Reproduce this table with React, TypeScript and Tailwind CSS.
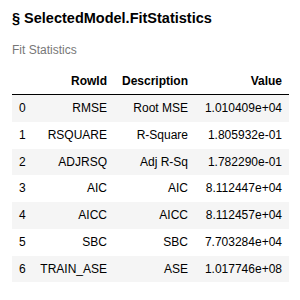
const rows = [
  ['0', 'RMSE', 'Root MSE', '1.010409e+04'],
  ['1', 'RSQUARE', 'R-Square', '1.805932e-01'],
  ['2', 'ADJRSQ', 'Adj R-Sq', '1.782290e-01'],
  ['3', 'AIC', 'AIC', '8.112447e+04'],
  ['4', 'AICC', 'AICC', '8.112457e+04'],
  ['5', 'SBC', 'SBC', '7.703284e+04'],
  ['6', 'TRAIN_ASE', 'ASE', '1.017746e+08'],
];

export default function App() {
  return (
    <main className="min-h-screen w-[300px] bg-white px-[12px] pt-[10px] font-['Liberation_Sans',Arial,sans-serif] text-black">
      <h1 className="text-[14.5px] font-bold leading-[17px]">§ SelectedModel.FitStatistics</h1>
      <p className="mt-[15.6px] text-[12px] leading-[14px] text-[#777]">Fit Statistics</p>
      <table className="mt-[11px] w-[277px] table-fixed border-collapse text-[12px] leading-[14.7px]">
        <colgroup>
          <col className="w-[24px]" />
          <col className="w-[77px]" />
          <col className="w-[81px]" />
          <col className="w-[95px]" />
        </colgroup>
        <thead>
          <tr className="border-b border-black">
            <th className="py-[6px]" />
            <th className="py-[6px] pr-[6px] text-right font-bold">RowId</th>
            <th className="py-[6px] pr-[6px] text-right font-bold">Description</th>
            <th className="py-[6px] pr-[7px] text-right font-bold">Value</th>
          </tr>
        </thead>
        <tbody>
          {rows.map((r, i) => (
            <tr key={r[0]} className={i % 2 === 0 ? 'bg-[#f5f5f5]' : 'bg-white'}>
              <td className="py-[6px] pl-[7px] text-left">{r[0]}</td>
              <td className="whitespace-nowrap py-[6px] pr-[6px] text-right">{r[1]}</td>
              <td className="whitespace-nowrap py-[6px] pr-[6px] text-right">{r[2]}</td>
              <td className="whitespace-nowrap py-[6px] pr-[7px] text-right">{r[3]}</td>
            </tr>
          ))}
        </tbody>
      </table>
    </main>
  );
}
